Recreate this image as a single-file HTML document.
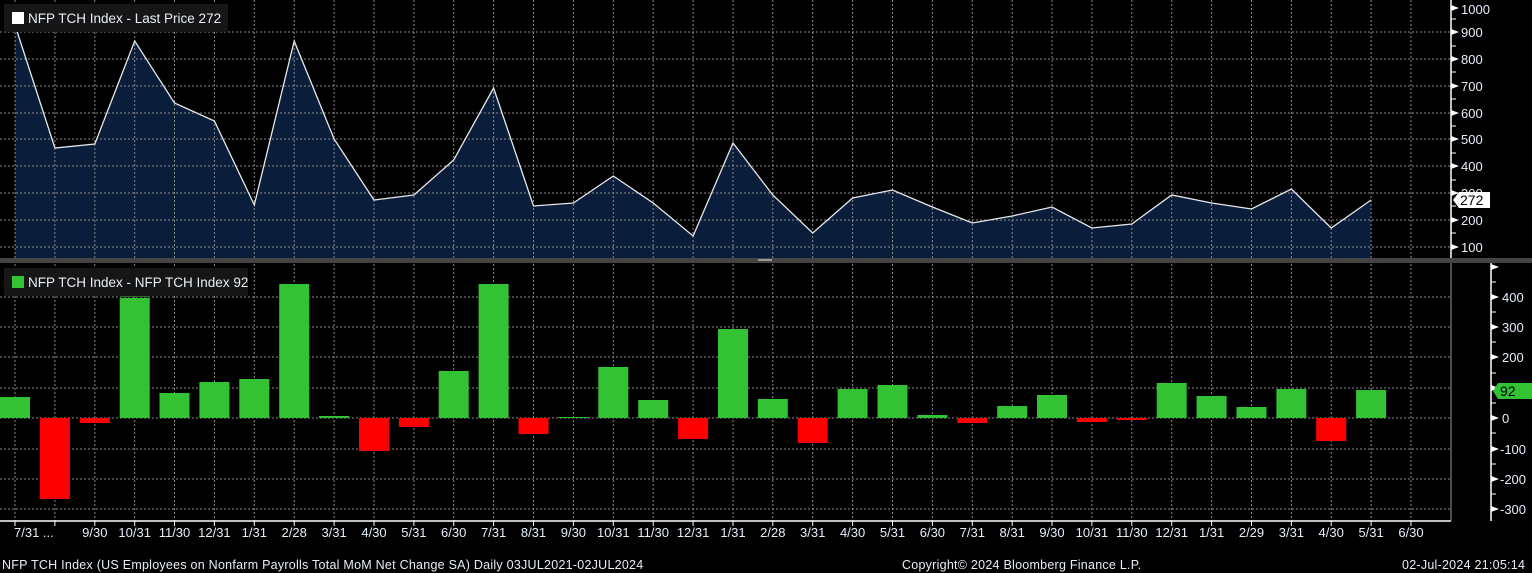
<!DOCTYPE html>
<html><head><meta charset="utf-8"><style>
html,body{margin:0;padding:0;background:#000;width:1532px;height:573px;overflow:hidden}
svg{display:block}
text{font-family:"Liberation Sans",sans-serif;font-size:13px;fill:#e8eef8}
.ax text{fill:#e6eefa}
.lg{font-size:13.5px}
.ft{font-size:12.5px;letter-spacing:0.25px}
</style></head><body>
<svg width="1532" height="573" viewBox="0 0 1532 573" xmlns="http://www.w3.org/2000/svg">
<rect width="1532" height="573" fill="#000"/>
<polygon fill="#0a1e3c" points="15,258 15,25 54.9,148 94.8,144 134.7,41 174.5,103 214.4,121 254.3,205 294.2,41 334.1,139 374,200 413.9,195 453.7,160 493.6,88 533.5,206 573.4,203 613.3,176 653.2,203 693.1,236 733,143 772.8,195 812.7,233 852.6,198 892.5,190 932.4,207 972.3,223 1012.2,216 1052,207 1091.9,228 1131.8,224 1171.7,195 1211.6,203 1251.5,209 1291.4,189 1331.2,228 1371.1,200 1371.1,258"/>
<g stroke="#8a8a8a" stroke-width="1" stroke-dasharray="2,2" fill="none">
<path d="M0 32H1451M0 59H1451M0 86H1451M0 113H1451M0 139H1451M0 166H1451M0 193H1451M0 220H1451M0 247H1451"/>
<path d="M0 297H1451M0 327H1451M0 357H1451M0 388H1451M0 418H1451M0 449H1451M0 479H1451M0 509H1451"/>
<path d="M15 0V521M54.9 0V521M94.8 0V521M134.7 0V521M174.5 0V521M214.4 0V521M254.3 0V521M294.2 0V521M334.1 0V521M374 0V521M413.9 0V521M453.7 0V521M493.6 0V521M533.5 0V521M573.4 0V521M613.3 0V521M653.2 0V521M693.1 0V521M733 0V521M772.8 0V521M812.7 0V521M852.6 0V521M892.5 0V521M932.4 0V521M972.3 0V521M1012.2 0V521M1052 0V521M1091.9 0V521M1131.8 0V521M1171.7 0V521M1211.6 0V521M1251.5 0V521M1291.4 0V521M1331.2 0V521M1371.1 0V521M1411 0V521"/>
</g>
<polyline fill="none" stroke="#e8e8e8" stroke-width="1.3" points="15,25 54.9,148 94.8,144 134.7,41 174.5,103 214.4,121 254.3,205 294.2,41 334.1,139 374,200 413.9,195 453.7,160 493.6,88 533.5,206 573.4,203 613.3,176 653.2,203 693.1,236 733,143 772.8,195 812.7,233 852.6,198 892.5,190 932.4,207 972.3,223 1012.2,216 1052,207 1091.9,228 1131.8,224 1171.7,195 1211.6,203 1251.5,209 1291.4,189 1331.2,228 1371.1,200"/>
<rect x="0" y="258" width="1532" height="5" fill="#444"/>
<rect x="758" y="259" width="14" height="2" fill="#999"/>
<g fill="#33c233">
<rect x="0" y="397" width="30" height="21"/>
<rect x="119.7" y="298" width="30" height="120"/>
<rect x="159.5" y="393" width="30" height="25"/>
<rect x="199.4" y="382" width="30" height="36"/>
<rect x="239.3" y="379" width="30" height="39"/>
<rect x="279.2" y="284" width="30" height="134"/>
<rect x="319.1" y="416" width="30" height="2"/>
<rect x="438.7" y="371" width="30" height="47"/>
<rect x="478.6" y="284" width="30" height="134"/>
<rect x="558.4" y="417" width="30" height="1"/>
<rect x="598.3" y="367" width="30" height="51"/>
<rect x="638.2" y="400" width="30" height="18"/>
<rect x="718" y="329" width="30" height="89"/>
<rect x="757.8" y="399" width="30" height="19"/>
<rect x="837.6" y="389" width="30" height="29"/>
<rect x="877.5" y="385" width="30" height="33"/>
<rect x="917.4" y="415" width="30" height="3"/>
<rect x="997.2" y="406" width="30" height="12"/>
<rect x="1037" y="395" width="30" height="23"/>
<rect x="1156.7" y="383" width="30" height="35"/>
<rect x="1196.6" y="396" width="30" height="22"/>
<rect x="1236.5" y="407" width="30" height="11"/>
<rect x="1276.4" y="389" width="30" height="29"/>
<rect x="1356.1" y="390" width="30" height="28"/>
</g>
<rect x="119.7" y="293" width="30" height="4" fill="#2a6b2a"/>
<g fill="#ff0000">
<rect x="39.9" y="418" width="30" height="81"/>
<rect x="79.8" y="418" width="30" height="5"/>
<rect x="359" y="418" width="30" height="33"/>
<rect x="398.9" y="418" width="30" height="9"/>
<rect x="518.5" y="418" width="30" height="16"/>
<rect x="678.1" y="418" width="30" height="21"/>
<rect x="797.7" y="418" width="30" height="25"/>
<rect x="957.3" y="418" width="30" height="5"/>
<rect x="1076.9" y="418" width="30" height="4"/>
<rect x="1116.8" y="418" width="30" height="2"/>
<rect x="1316.2" y="418" width="30" height="23"/>
</g>
<rect x="4" y="4" width="224" height="28" rx="2" fill="#161616"/>
<rect x="12" y="12" width="12" height="12" fill="#fff"/>
<text class="lg" x="28" y="23">NFP TCH Index - Last Price 272</text>
<rect x="4" y="268" width="244" height="28" rx="2" fill="#161616"/>
<rect x="12" y="276" width="12" height="12" fill="#33c233"/>
<text class="lg" x="28" y="287">NFP TCH Index - NFP TCH Index 92</text>
<g stroke="#fff" stroke-width="1.5">
<path d="M1451 0V258"/>
<path d="M1491 263V521"/>
<path d="M0 521H1451"/>
</g>
<path d="M1451 263V521" stroke="#999" stroke-width="1"/>
<g stroke="#fff" stroke-width="1">
<path d="M1451 19H1456M1451 46H1456M1451 72H1456M1451 99H1456M1451 126H1456M1451 153H1456M1451 180H1456M1451 206H1456M1451 233H1456"/>
<path d="M1491 282H1496M1491 312H1496M1491 342H1496M1491 373H1496M1491 403H1496M1491 433H1496M1491 464H1496M1491 494H1496"/>
<path d="M15 521V526M54.9 521V526M94.8 521V526M134.7 521V526M174.5 521V526M214.4 521V526M254.3 521V526M294.2 521V526M334.1 521V526M374 521V526M413.9 521V526M453.7 521V526M493.6 521V526M533.5 521V526M573.4 521V526M613.3 521V526M653.2 521V526M693.1 521V526M733 521V526M772.8 521V526M812.7 521V526M852.6 521V526M892.5 521V526M932.4 521V526M972.3 521V526M1012.2 521V526M1052 521V526M1091.9 521V526M1131.8 521V526M1171.7 521V526M1211.6 521V526M1251.5 521V526M1291.4 521V526M1331.2 521V526M1371.1 521V526M1411 521V526"/>
</g>
<g fill="#fff">
<path d="M1451 5l8 3-8 3z"/><path d="M1451 29l8 3-8 3z"/><path d="M1451 56l8 3-8 3z"/><path d="M1451 83l8 3-8 3z"/><path d="M1451 110l8 3-8 3z"/><path d="M1451 136l8 3-8 3z"/><path d="M1451 163l8 3-8 3z"/><path d="M1451 190l8 3-8 3z"/><path d="M1451 217l8 3-8 3z"/><path d="M1451 244l8 3-8 3z"/>
<path d="M1491 264l8 3-8 3z"/><path d="M1491 294l8 3-8 3z"/><path d="M1491 324l8 3-8 3z"/><path d="M1491 354l8 3-8 3z"/><path d="M1491 385l8 3-8 3z"/><path d="M1491 415l8 3-8 3z"/><path d="M1491 446l8 3-8 3z"/><path d="M1491 476l8 3-8 3z"/><path d="M1491 506l8 3-8 3z"/>
</g>
<g class="ax">
<text x="1461" y="14">1000</text><text x="1461" y="37">900</text><text x="1461" y="64">800</text><text x="1461" y="91">700</text><text x="1461" y="118">600</text><text x="1461" y="144">500</text><text x="1461" y="171">400</text><text x="1461" y="198">300</text><text x="1461" y="225">200</text><text x="1461" y="252">100</text>
<text x="1502" y="302">400</text><text x="1502" y="332">300</text><text x="1502" y="362">200</text><text x="1502" y="393">100</text><text x="1502" y="423">0</text><text x="1500" y="454">-100</text><text x="1500" y="484">-200</text><text x="1500" y="514">-300</text>
</g>
<path d="M1453 200l6-8h31v16h-31z" fill="#fff"/>
<text x="1460" y="205" style="fill:#000;font-size:14px">272</text>
<path d="M1493 391l5-8h34v16h-34z" fill="#33c233"/>
<text x="1500" y="396" style="fill:#000;font-size:14px">92</text>
<g class="ax" text-anchor="middle">
<text x="14" y="537" text-anchor="start">7/31 ...</text>
<text x="94.8" y="537">9/30</text><text x="134.7" y="537">10/31</text><text x="174.5" y="537">11/30</text><text x="214.4" y="537">12/31</text><text x="254.3" y="537">1/31</text><text x="294.2" y="537">2/28</text><text x="334.1" y="537">3/31</text><text x="374" y="537">4/30</text><text x="413.9" y="537">5/31</text><text x="453.7" y="537">6/30</text><text x="493.6" y="537">7/31</text><text x="533.5" y="537">8/31</text><text x="573.4" y="537">9/30</text><text x="613.3" y="537">10/31</text><text x="653.2" y="537">11/30</text><text x="693.1" y="537">12/31</text><text x="733" y="537">1/31</text><text x="772.8" y="537">2/28</text><text x="812.7" y="537">3/31</text><text x="852.6" y="537">4/30</text><text x="892.5" y="537">5/31</text><text x="932.4" y="537">6/30</text><text x="972.3" y="537">7/31</text><text x="1012.2" y="537">8/31</text><text x="1052" y="537">9/30</text><text x="1091.9" y="537">10/31</text><text x="1131.8" y="537">11/30</text><text x="1171.7" y="537">12/31</text><text x="1211.6" y="537">1/31</text><text x="1251.5" y="537">2/29</text><text x="1291.4" y="537">3/31</text><text x="1331.2" y="537">4/30</text><text x="1371.1" y="537">5/31</text><text x="1411" y="537">6/30</text>
</g>
<text class="ft" x="2" y="569">NFP TCH Index (US Employees on Nonfarm Payrolls Total MoM Net Change SA)  Daily 03JUL2021-02JUL2024</text>
<text class="ft" x="902" y="569">Copyright© 2024 Bloomberg Finance L.P.</text>
<text class="ft" x="1402" y="569">02-Jul-2024 21:05:14</text>
</svg>
</body></html>
